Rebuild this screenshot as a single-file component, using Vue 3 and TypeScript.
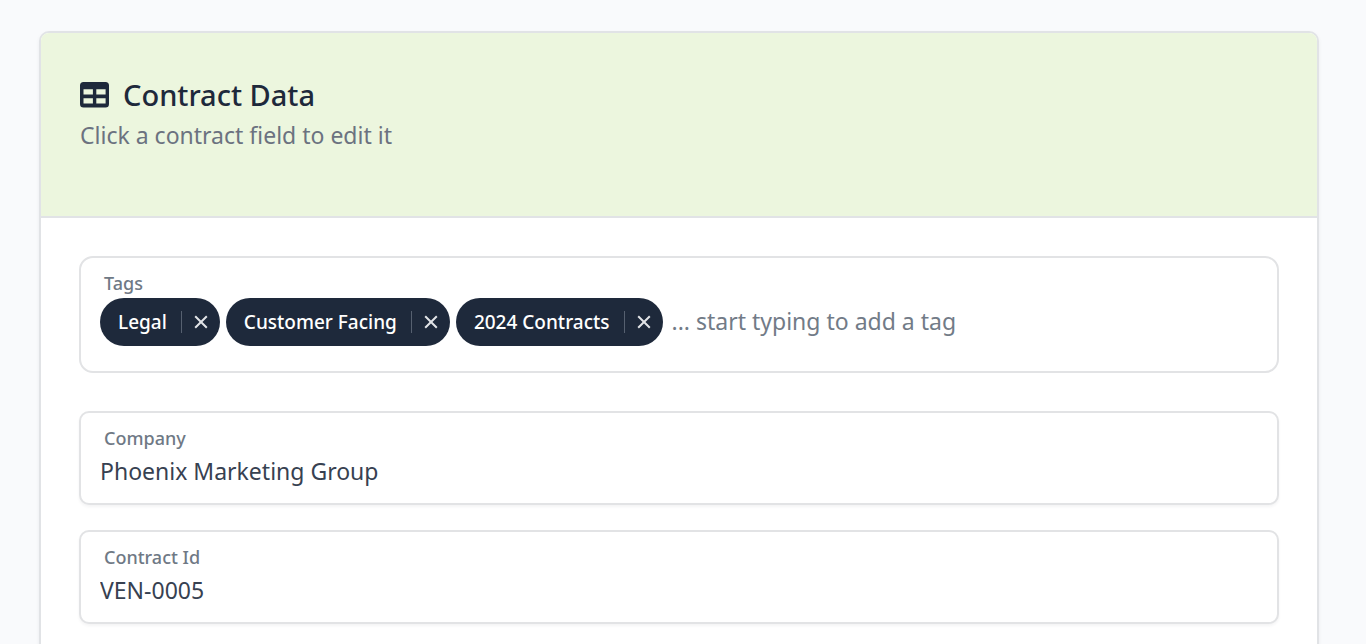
<script setup lang="ts">
import { ref } from 'vue'

interface Field {
  id: string
  label: string
  value: string
}

const tags = ref<string[]>(['Legal', 'Customer Facing', '2024 Contracts'])
const draft = ref('')
const fields = ref<Field[]>([
  { id: 'company', label: 'Company', value: 'Phoenix Marketing Group' },
  { id: 'contract-id', label: 'Contract Id', value: 'VEN-0005' },
])

function addTag(): void {
  const name = draft.value.trim()
  if (name && !tags.value.includes(name)) tags.value.push(name)
  draft.value = ''
}

function removeTag(name: string): void {
  tags.value = tags.value.filter((tag) => tag !== name)
}
</script>

<template>
  <main class="page">
    <section class="card">
      <header class="card-header">
        <h1 class="title">
          <svg class="title-icon" viewBox="0 0 29 26" aria-hidden="true">
            <path
              fill="currentColor"
              fill-rule="evenodd"
              d="M3.500 0H25.500A3.500 3.500 0 0 1 29 3.500V22A3.500 3.500 0 0 1 25.500 25.500H3.500A3.500 3.500 0 0 1 0 22V3.500A3.500 3.500 0 0 1 3.500 0ZM3.500 7.200V12.400H12.900V7.200ZM16.300 7.200V12.400H25.600V7.200ZM3.500 16.200V21.500H12.900V16.200ZM16.300 16.200V21.500H25.600V16.200Z"
            />
          </svg>
          Contract Data
        </h1>
        <p class="subtitle">Click a contract field to edit it</p>
      </header>

      <div class="card-body">
        <div class="box tags-box">
          <label class="label" for="tag-input">Tags</label>
          <div class="tag-row">
            <span v-for="tag in tags" :key="tag" class="tag">
              <span class="tag-name">{{ tag }}</span>
              <button class="tag-remove" type="button" :aria-label="`Remove ${tag}`" @click="removeTag(tag)">
                <svg class="cross" viewBox="0 0 14 14" aria-hidden="true">
                  <path d="M1.200 1.200L12.800 12.800M12.800 1.200L1.200 12.800" />
                </svg>
              </button>
            </span>
            <input
              id="tag-input"
              v-model="draft"
              class="tag-input"
              type="text"
              placeholder="... start typing to add a tag"
              @keydown.enter.prevent="addTag"
            />
          </div>
        </div>

        <div v-for="field in fields" :key="field.id" class="box field">
          <label class="label" :for="field.id">{{ field.label }}</label>
          <input :id="field.id" v-model="field.value" class="value" type="text" />
        </div>
      </div>
    </section>
  </main>
</template>

<style>
body {
  margin: 0;
  background: #f9fafc;
}
</style>

<style scoped>
.page {
  box-sizing: border-box;
  height: 100vh;
  overflow: hidden;
  padding: 31px 47px 0 39px;
  background: #f9fafc;
  font-family: "Noto Sans", sans-serif;
}

.card {
  border: 2px solid #e1e3e6;
  border-radius: 10px;
  background: #fff;
  box-shadow: 0 2px 4px rgba(30, 41, 59, 0.06);
  overflow: hidden;
}

.card-header {
  padding: 40px 39px 63px;
  border-bottom: 2px solid #e1e3e6;
  background: #ecf6de;
}

.title {
  display: flex;
  align-items: center;
  gap: 14px;
  margin: 0;
  color: #1e293b;
  font-size: 29px;
  font-weight: 500;
  line-height: 44px;
}

.title-icon {
  width: 29px;
  height: 26px;
}

.subtitle {
  margin: 0;
  color: #6b7280;
  font-size: 23px;
  line-height: 36px;
}

.card-body {
  padding: 38px 38px 48px;
}

.box {
  box-sizing: border-box;
  border: 2px solid #e2e3e5;
  border-radius: 10px;
  background: #fff;
}

.tags-box {
  min-height: 117px;
  margin-bottom: 38px;
  padding: 11px 19px 24px;
  border-radius: 14px;
}

.field {
  margin-bottom: 25px;
  padding: 11px 19px 13px;
  box-shadow: 0 2px 3px rgba(30, 41, 59, 0.05);
}

.label {
  display: block;
  padding-left: 4px;
  color: #6f7985;
  font-size: 18px;
  font-weight: 500;
  line-height: 28px;
}

.tag-row {
  display: flex;
  flex-wrap: wrap;
  align-items: center;
  gap: 6px;
  padding-top: 1px;
}

.tag {
  display: flex;
  align-items: center;
  height: 48px;
  padding-left: 18px;
  border-radius: 24px;
  background: #1e293b;
}

.tag-name {
  padding-right: 14px;
  color: #fff;
  font-size: 19px;
  font-weight: 500;
  line-height: 24px;
  white-space: nowrap;
}

.tag-remove {
  display: flex;
  align-items: center;
  height: 22px;
  padding: 0 12px;
  border: 0;
  border-left: 1px solid #566070;
  background: none;
  cursor: pointer;
}

.cross {
  width: 14px;
  height: 14px;
  fill: none;
  stroke: #e2e4e7;
  stroke-width: 2;
}

.tag-input,
.value {
  box-sizing: border-box;
  min-width: 0;
  margin: 0;
  padding: 0;
  border: 0;
  outline: 0;
  background: none;
  font-family: inherit;
  font-size: 23px;
  line-height: 38px;
  height: 38px;
  color: #374151;
}

.tag-input {
  flex: 1;
  padding: 0 0 2px 3px;
}

.tag-input::placeholder {
  color: #727b87;
  opacity: 1;
}

.value {
  display: block;
  width: 100%;
}
</style>
